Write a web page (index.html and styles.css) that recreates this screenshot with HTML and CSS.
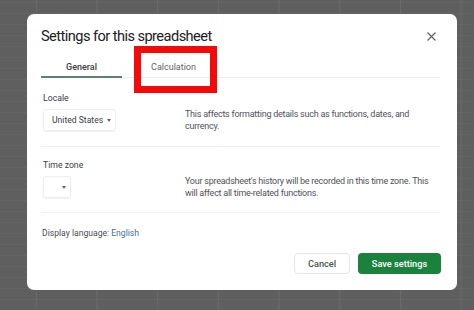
FILE: index.html
```html
<!DOCTYPE html>
<html>
<head>
<meta charset="utf-8">
<link rel="stylesheet" href="styles.css">
</head>
<body>
<div class="page">
  <div class="dialog">
    <div class="head">
      <h1 class="title">Settings for this spreadsheet</h1>
      <button class="close" aria-label="Close">
        <svg width="9" height="9" viewBox="0 0 9 9"><path d="M0.5 0.5L8.5 8.5M8.5 0.5L0.5 8.5" stroke="#5f6368" stroke-width="1.2" fill="none"/></svg>
      </button>
    </div>
    <div class="tabs">
      <div class="tab active">General</div>
      <div class="tab">Calculation</div>
      <div class="tab-fill"></div>
      <div class="highlight"></div>
    </div>
    <div class="section first">
      <div class="label">Locale</div>
      <div class="row">
        <div class="ctrl">
          <div class="select wide"><span>United States</span><span class="caret"></span></div>
        </div>
        <div class="desc">This affects formatting details such as functions, dates, and currency.</div>
      </div>
    </div>
    <div class="section second">
      <div class="label">Time zone</div>
      <div class="row">
        <div class="ctrl">
          <div class="select narrow"><span class="caret"></span></div>
        </div>
        <div class="desc">Your spreadsheet's history will be recorded in this time zone. This will affect all time-related functions.</div>
      </div>
    </div>
    <div class="lang">Display language: <span class="link">English</span></div>
    <div class="actions">
      <button class="btn cancel">Cancel</button>
      <button class="btn save">Save settings</button>
    </div>
  </div>
</div>
</body>
</html>
```

FILE: styles.css
```css
* { box-sizing: border-box; }
html, body { margin: 0; padding: 0; }
body {
  width: 474px;
  height: 310px;
  overflow: hidden;
  font-family: Roboto, "Liberation Sans", Arial, sans-serif;
  background-color: #5f5f5f;
  background-image:
    linear-gradient(to right, transparent 36px, #6b6b6b 36px, #6b6b6b 37px, transparent 37px),
    linear-gradient(to bottom, transparent 10px, #646464 10px, #646464 11px, transparent 11px);
  background-size: 60.7px 100%, 100% 11px;
  background-position: 0 0, 0 3px;
}
.page {
  padding: 14px 0 0 27px;
}
.dialog {
  position: relative;
  width: 430px;
  height: 276px;
  background: #fff;
  border-radius: 7px;
  padding: 12px 17px 16px 14px;
  display: flex;
  flex-direction: column;
}
.head {
  display: flex;
  justify-content: space-between;
  align-items: center;
  height: 22px;
}
.title {
  margin: 0;
  font-size: 14.6px;
  letter-spacing: -0.55px;
  font-weight: 400;
  color: #202124;
  line-height: 22px;
  transform: translateY(-1px);
}
.close {
  border: 0;
  background: none;
  padding: 0;
  width: 9px;
  height: 9px;
  display: flex;
  transform: translate(-4px, -1px);
}
.tabs {
  position: relative;
  display: flex;
  margin-top: 10px;
  height: 20px;
  border-bottom: 1px solid #ececec;
}
.tab {
  width: 81px;
  text-align: center;
  font-size: 9px;
  line-height: 18px;
  color: #5f6368;
}
.tab + .tab { width: 103px; }
.tab.active {
  color: #3c4043;
  font-weight: 500;
  border-bottom: 2px solid #5e7f78;
  margin-bottom: -1px;
}
.tab-fill { flex: 1; }
.highlight {
  position: absolute;
  left: 93px;
  top: -12px;
  width: 83px;
  height: 47px;
  border: 7px solid #f50a0a;
}
.section {
  padding-left: 2px;
  border-bottom: 1px solid #f0f0f0;
}
.section.first { padding-top: 14px; padding-bottom: 14px; }
.section.second { padding-top: 12px; padding-bottom: 13px; }
.label {
  font-size: 8.7px;
  line-height: 13px;
  color: #3c4043;
}
.row {
  display: flex;
  align-items: center;
  margin-top: 3px;
}
.ctrl {
  width: 142px;
  flex: none;
}
.select {
  height: 22px;
  border: 1px solid #eeeeee;
  border-radius: 3px;
  box-shadow: 0 1px 1px rgba(0,0,0,0.06);
  display: flex;
  align-items: center;
  justify-content: flex-end;
  font-size: 8.6px;
  color: #3c4043;
  padding: 0 4px 0 8px;
  white-space: nowrap;
}
.select.wide { width: 73px; justify-content: space-between; }
.select.narrow { width: 28px; padding-right: 4px; }
.caret {
  width: 0;
  height: 0;
  border-left: 2.5px solid transparent;
  border-right: 2.5px solid transparent;
  border-top: 3px solid #5f6368;
}
.desc {
  font-size: 9px;
  letter-spacing: -0.25px;
  line-height: 12px;
  color: #4f5358;
  width: 245px;
}
.lang {
  margin-top: 14px;
  padding-left: 1px;
  font-size: 8.6px;
  line-height: 13px;
  color: #4a4e53;
}
.link { color: #3b6fa3; }
.actions {
  margin-top: auto;
  display: flex;
  justify-content: flex-end;
  gap: 8px;
  margin-right: -1px;
}
.btn {
  height: 21px;
  border-radius: 4px;
  font-family: Roboto, "Liberation Sans", Arial, sans-serif;
  font-size: 9.2px;
  font-weight: 500;
  padding: 0;
}
.cancel {
  width: 56px;
  background: #fff;
  border: 1px solid #e6e6e6;
  color: #44584f;
}
.save {
  width: 83px;
  background: #1b823d;
  border: 0;
  color: #fff;
}
```
